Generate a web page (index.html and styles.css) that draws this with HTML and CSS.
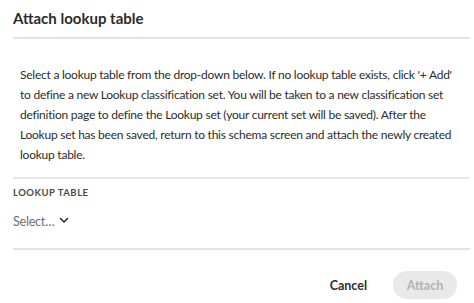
FILE: index.html
```html
<!DOCTYPE html>
<html>
<head>
<meta charset="utf-8">
<link rel="stylesheet" href="styles.css">
</head>
<body>
<div class="dialog">
  <div class="header">
    <h1 class="title">Attach lookup table</h1>
  </div>
  <div class="content">
    <p class="desc">Select a lookup table from the drop-down below. If no lookup table exists, click '+ Add'<br>to define a new Lookup classification set. You will be taken to a new classification set<br>definition page to define the Lookup set (your current set will be saved). After the<br>Lookup set has been saved, return to this schema screen and attach the newly created<br>lookup table.</p>
  </div>
  <div class="field">
    <div class="label">LOOKUP TABLE</div>
    <div class="picker">
      <span class="placeholder">Select…</span>
      <svg class="chevron" width="10" height="7" viewBox="0 0 10 7"><path d="M1.5 1.5 L5 5 L8.5 1.5" fill="none" stroke="#2c2c2c" stroke-width="1.6" stroke-linecap="round" stroke-linejoin="round"/></svg>
    </div>
  </div>
  <div class="footer">
    <button class="btn cancel">Cancel</button>
    <button class="btn attach" disabled>Attach</button>
  </div>
</div>
</body>
</html>
```
FILE: styles.css
```css
html, body {
  margin: 0;
  padding: 0;
  background: #ffffff;
}
body {
  font-family: "Lato", "Open Sans", sans-serif;
  color: #2c2c2c;
  width: 474px;
  height: 303px;
  overflow: hidden;
}
.dialog {
  padding: 0 4px 0 13px;
  display: flex;
  flex-direction: column;
}
.header {
  height: 37px;
  border-bottom: 2px solid #e4e4e4;
  display: flex;
  align-items: flex-start;
}
.title {
  margin: 9px 0 0 0;
  font-size: 15px;
  font-weight: 700;
  line-height: 18px;
  color: #2c2c2c;
}
.content {
  border-bottom: 2px solid #e8e8e8;
  padding: 26px 0 12px 7px;
}
.desc {
  margin: 0;
  white-space: nowrap;
  font-size: 12px;
  letter-spacing: -0.24px;
  line-height: 20px;
  color: #2c2c2c;
}
.field {
  border-bottom: 2px solid #e4e4e4;
  padding-top: 8px;
  height: 71px;
  box-sizing: border-box;
}
.label {
  font-size: 9.5px;
  font-weight: 700;
  letter-spacing: 0.5px;
  color: #4b4b4b;
  line-height: 12px;
}
.picker {
  margin-top: 15px;
  display: flex;
  align-items: center;
  gap: 5px;
}
.placeholder {
  font-size: 12.5px;
  letter-spacing: -0.2px;
  color: #6e6e6e;
  line-height: 16px;
}
.chevron {
  margin-top: -4px;
}
.footer {
  display: flex;
  justify-content: flex-end;
  align-items: center;
  gap: 26px;
  padding: 21px 13px 0 0;
}
.btn {
  font-family: inherit;
  font-size: 12.5px;
  font-weight: 700;
  border: none;
  cursor: pointer;
}
.cancel {
  background: none;
  color: #2c2c2c;
  padding: 0;
}
.attach {
  background: #e9e9e9;
  color: #b3b3b3;
  height: 28px;
  width: 64px;
  border-radius: 14px;
  padding: 0;
}
```
